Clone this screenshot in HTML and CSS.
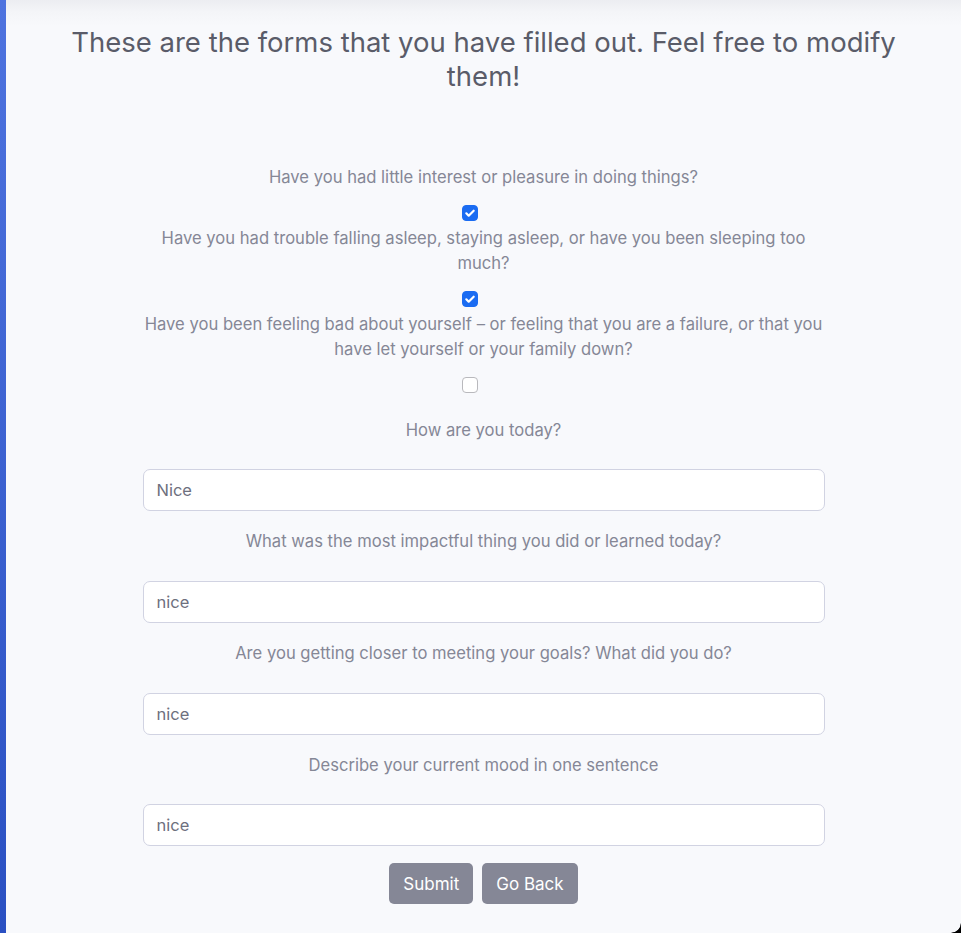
FILE: index.html
```html
<!DOCTYPE html>
<html lang="en">
<head>
<meta charset="utf-8">
<title>Your forms</title>
<link rel="stylesheet" href="styles.css">
</head>
<body>
<div class="app">
  <div class="sidebar"></div>
  <main class="content">
    <h1 class="title">These are the forms that you have filled out. Feel free to modify them!</h1>
    <form class="form">
      <div class="q-check">
        <label class="q-label">Have you had little interest or pleasure in doing things?</label>
        <span class="cb checked"><svg viewBox="0 0 16 16" width="16" height="16"><path d="M4.3 8.3l2.4 2.4 5-5" fill="none" stroke="#fff" stroke-width="2.2" stroke-linecap="round" stroke-linejoin="round"/></svg></span>
      </div>
      <div class="q-check">
        <label class="q-label">Have you had trouble falling asleep, staying asleep, or have you been sleeping too much?</label>
        <span class="cb checked"><svg viewBox="0 0 16 16" width="16" height="16"><path d="M4.3 8.3l2.4 2.4 5-5" fill="none" stroke="#fff" stroke-width="2.2" stroke-linecap="round" stroke-linejoin="round"/></svg></span>
      </div>
      <div class="q-check">
        <label class="q-label">Have you been feeling bad about yourself – or feeling that you are a failure, or that you have let yourself or your family down?</label>
        <span class="cb"></span>
      </div>
      <div class="q-text first">
        <label class="q-label">How are you today?</label>
        <input class="field" type="text" value="Nice">
      </div>
      <div class="q-text">
        <label class="q-label">What was the most impactful thing you did or learned today?</label>
        <input class="field" type="text" value="nice">
      </div>
      <div class="q-text">
        <label class="q-label">Are you getting closer to meeting your goals? What did you do?</label>
        <input class="field" type="text" value="nice">
      </div>
      <div class="q-text">
        <label class="q-label">Describe your current mood in one sentence</label>
        <input class="field" type="text" value="nice">
      </div>
      <div class="actions">
        <button class="btn" type="button">Submit</button>
        <button class="btn" type="button">Go Back</button>
      </div>
    </form>
  </main>
</div>
</body>
</html>
```
FILE: styles.css
```css
html, body {
  margin: 0;
  padding: 0;
  background: #000;
}
body {
  font-family: Inter, "Noto Sans", "Liberation Sans", sans-serif;
}
.app {
  display: flex;
  height: 933px;
  overflow: hidden;
  border-bottom-right-radius: 10px;
}
.sidebar {
  width: 6px;
  flex: none;
  background: linear-gradient(180deg, #4e73df 0%, #2a50c2 100%);
}
.content {
  flex: 1;
  background: linear-gradient(180deg, #ecedf1 0px, #f4f5f8 12px, #f8f9fc 26px, #f8f9fc 100%);
  border-bottom-right-radius: 10px;
}
.title {
  margin: 0 auto;
  padding-top: 25px;
  width: 840px;
  text-align: center;
  font-size: 27.5px;
  line-height: 34px;
  font-weight: 400;
  color: #5a5c69;
}
.form {
  width: 682px;
  margin: 72px auto 0;
}
.q-label {
  display: block;
  text-align: center;
  font-size: 16.6px;
  line-height: 25px;
  color: #858796;
}
.q-check {
  display: flex;
  flex-direction: column;
  align-items: center;
  margin-bottom: 5.5px;
}
.cb {
  margin-top: 14.5px;
  margin-right: 28px;
  width: 16px;
  height: 16px;
  box-sizing: border-box;
  border: 1px solid #b9b9bd;
  border-radius: 4px;
  background: #fff;
  display: block;
}
.cb svg {
  display: block;
}
.cb.checked {
  background: #1b6cf2;
  border-color: #1b6cf2;
}
.cb.checked svg {
  margin: -1px;
}
.q-text {
  margin-top: 18.3px;
}
.q-text.first {
  margin-top: 25px;
}
.field {
  display: block;
  box-sizing: border-box;
  width: 100%;
  height: 42px;
  margin-top: 26.5px;
  padding: 0 13px;
  border: 1px solid #d1d3e2;
  border-radius: 7px;
  background: #fff;
  font-family: inherit;
  font-size: 16.5px;
  color: #6e707e;
  outline: none;
}
.actions {
  display: flex;
  justify-content: center;
  gap: 9px;
  margin-top: 17px;
}
.btn {
  height: 41px;
  padding: 0 14px;
  border: none;
  border-radius: 5px;
  background: #858796;
  color: #fff;
  font-family: inherit;
  font-size: 17px;
}
```
